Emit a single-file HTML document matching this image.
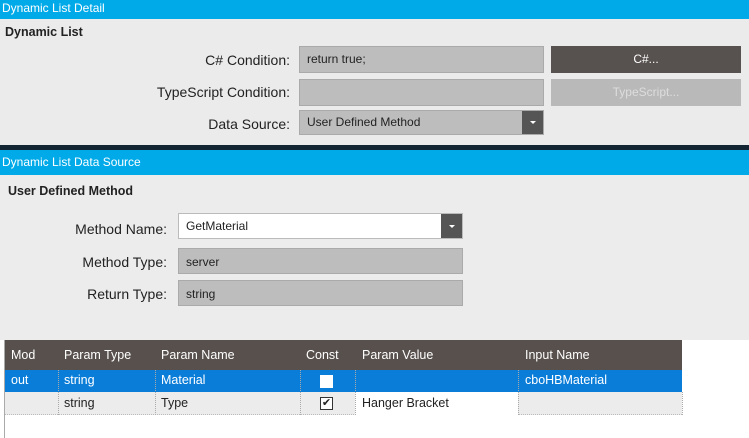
<!DOCTYPE html>
<html><head><style>
*{margin:0;padding:0;box-sizing:border-box}
body{width:749px;height:438px;overflow:hidden;background:#fff;font-family:"Liberation Sans",sans-serif;font-size:12px;color:#222;position:relative}
.a{position:absolute}
.bar{background:#00aae9;color:#fff;font-size:12px;padding-left:2px}
.lbl{text-align:right;font-size:14px;color:#222}
.box{background:#bdbdbd;border:1px solid #aaa;font-size:12px;padding-left:7px}
.th{color:#fff;font-size:12.5px;top:348px}
.c{font-size:12.5px}
</style></head><body>
<div class="a bar" style="left:0;top:0;width:749px;height:19px;line-height:17px">Dynamic List Detail</div>
<div class="a" style="left:0;top:19px;width:749px;height:126px;background:#ebebeb"></div>
<div class="a" style="left:5px;top:25px;font-weight:bold;font-size:12.5px">Dynamic List</div>
<div class="a lbl" style="right:459px;top:52px">C# Condition:</div>
<div class="a lbl" style="right:459px;top:84px">TypeScript Condition:</div>
<div class="a lbl" style="right:459px;top:116px">Data Source:</div>
<div class="a box" style="left:299px;top:46px;width:245px;height:27px;line-height:25px">return true;</div>
<div class="a box" style="left:299px;top:79px;width:245px;height:27px"></div>
<div class="a box" style="left:299px;top:110px;width:245px;height:25px;line-height:23px">User Defined Method</div>
<div class="a" style="left:522px;top:111px;width:21px;height:23px;background:#555"><div class="a" style="left:8px;top:10px;border-left:3px solid transparent;border-right:3px solid transparent;border-top:3px solid #fff"></div></div>
<div class="a" style="left:551px;top:46px;width:190px;height:27px;background:#57514f;color:#fff;text-align:center;line-height:27px">C#...</div>
<div class="a" style="left:551px;top:79px;width:190px;height:27px;background:#b9b9b9;color:#ddd;text-align:center;line-height:27px">TypeScript...</div>
<div class="a" style="left:0;top:145px;width:749px;height:5px;background:#132433"></div>
<div class="a bar" style="left:0;top:150px;width:749px;height:25px;line-height:24px">Dynamic List Data Source</div>
<div class="a" style="left:0;top:175px;width:749px;height:165px;background:#ececec"></div>
<div class="a" style="left:8px;top:184px;font-weight:bold;font-size:12.5px">User Defined Method</div>
<div class="a lbl" style="right:582px;top:221px">Method Name:</div>
<div class="a lbl" style="right:582px;top:254px">Method Type:</div>
<div class="a lbl" style="right:582px;top:286px">Return Type:</div>
<div class="a box" style="left:178px;top:213px;width:285px;height:26px;line-height:24px;background:#fff;border-color:#bbb">GetMaterial</div>
<div class="a" style="left:441px;top:214px;width:21px;height:24px;background:#555"><div class="a" style="left:8px;top:11px;border-left:3px solid transparent;border-right:3px solid transparent;border-top:3px solid #fff"></div></div>
<div class="a box" style="left:178px;top:248px;width:285px;height:26px;line-height:26px">server</div>
<div class="a box" style="left:178px;top:280px;width:285px;height:26px;line-height:26px">string</div>
<div class="a" style="left:4px;top:340px;width:1px;height:98px;background:#aaa"></div>
<div class="a" style="left:5px;top:340px;width:677px;height:30px;background:#57504d"></div>
<div class="a" style="left:5px;top:370px;width:677px;height:22px;background:#0a7dd9"></div>
<div class="a" style="left:5px;top:392px;width:677px;height:23px;background:#ececec;border-bottom:1px dotted #bbb"></div>
<div class="a" style="left:355px;top:392px;width:163px;height:23px;background:#fff"></div>
<div class="a th" style="left:11px">Mod</div><div class="a th" style="left:64px">Param Type</div><div class="a th" style="left:161px">Param Name</div><div class="a th" style="left:306px">Const</div><div class="a th" style="left:362px">Param Value</div><div class="a th" style="left:525px">Input Name</div>
<div class="a c" style="left:11px;top:373px;color:#fff">out</div><div class="a c" style="left:64px;top:373px;color:#fff">string</div><div class="a c" style="left:161px;top:373px;color:#fff">Material</div><div class="a c" style="left:525px;top:373px;color:#fff">cboHBMaterial</div>
<div class="a" style="left:320px;top:375px;width:13px;height:13px;background:#fff"></div>
<div class="a c" style="left:64px;top:396px">string</div><div class="a c" style="left:161px;top:396px">Type</div><div class="a c" style="left:362px;top:396px">Hanger Bracket</div>
<div class="a" style="left:320px;top:397px;width:13px;height:13px;background:#fff;border:1px solid #333;font-size:11px;line-height:11px;text-align:center">✔</div>
<div class="a" style="left:58px;top:370px;height:45px;border-left:1px dotted #aaa"></div>
<div class="a" style="left:155px;top:370px;height:45px;border-left:1px dotted #aaa"></div>
<div class="a" style="left:300px;top:370px;height:45px;border-left:1px dotted #aaa"></div>
<div class="a" style="left:355px;top:370px;height:45px;border-left:1px dotted #aaa"></div>
<div class="a" style="left:518px;top:370px;height:45px;border-left:1px dotted #aaa"></div>
<div class="a" style="left:682px;top:392px;height:23px;border-left:1px dotted #aaa"></div>
</body></html>
